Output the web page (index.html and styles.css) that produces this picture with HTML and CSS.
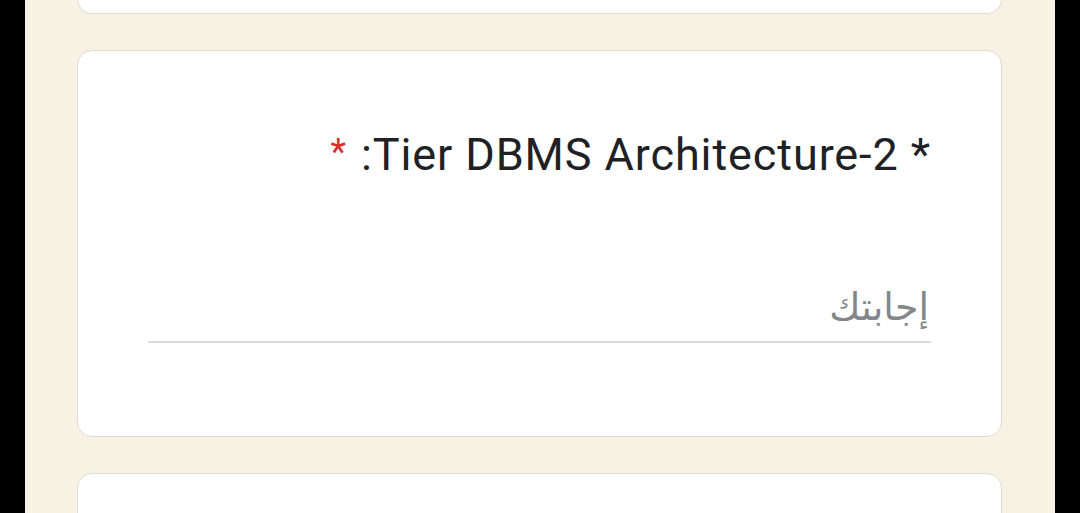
FILE: index.html
```html
<!DOCTYPE html>
<html lang="ar">
<head>
<meta charset="utf-8">
<link rel="stylesheet" href="styles.css">
</head>
<body>
<div class="frame">
  <div class="page">
    <div class="card card-prev"></div>
    <div class="card card-question">
      <div class="title"><span class="req">*</span><span class="title-text">:Tier DBMS Architecture-2 *</span></div>
      <div class="answer" dir="rtl">
        <div class="placeholder">إجابتك</div>
        <div class="underline"></div>
      </div>
    </div>
    <div class="card card-next"></div>
  </div>
</div>
</body>
</html>
```

FILE: styles.css
```css
html, body {
  margin: 0;
  padding: 0;
  background: #000;
  width: 1080px;
  height: 513px;
  overflow: hidden;
}
.frame {
  display: flex;
  justify-content: center;
  height: 513px;
}
.page {
  width: 1030px;
  background: #f7f2e4;
  height: 513px;
  display: flex;
  flex-direction: column;
  gap: 36px;
  padding: 0 53px 0 52px;
  box-sizing: border-box;
  overflow: hidden;
}
.card {
  background: #fff;
  border: 1.5px solid #dedbd3;
  border-radius: 15px;
  box-sizing: border-box;
  flex: none;
}
.card-prev {
  height: 60px;
  margin-top: -46px;
  border-top: none;
  border-top-left-radius: 0;
  border-top-right-radius: 0;
}
.card-question {
  height: 387px;
  padding: 0 70px;
  display: flex;
  flex-direction: column;
}
.card-next {
  height: 80px;
}
.title {
  display: flex;
  justify-content: flex-end;
  align-items: flex-start;
  gap: 14px;
  margin-top: 77px;
  font-family: Roboto, "Noto Sans", sans-serif;
  font-size: 45px;
  letter-spacing: 0.9px;
  color: #202124;
  line-height: 54px;
}
.req {
  color: #d93025;
  font-size: 36px;
  line-height: 40px;
  margin-top: 4px;
}
.answer {
  margin-top: 102px;
}
.placeholder {
  font-family: "DejaVu Sans", sans-serif;
  font-size: 38px;
  color: #83878b;
  line-height: 46px;
  padding-bottom: 11px;
  padding-right: 2px;
}
.underline {
  height: 1.5px;
  background: #dadce0;
}
```
